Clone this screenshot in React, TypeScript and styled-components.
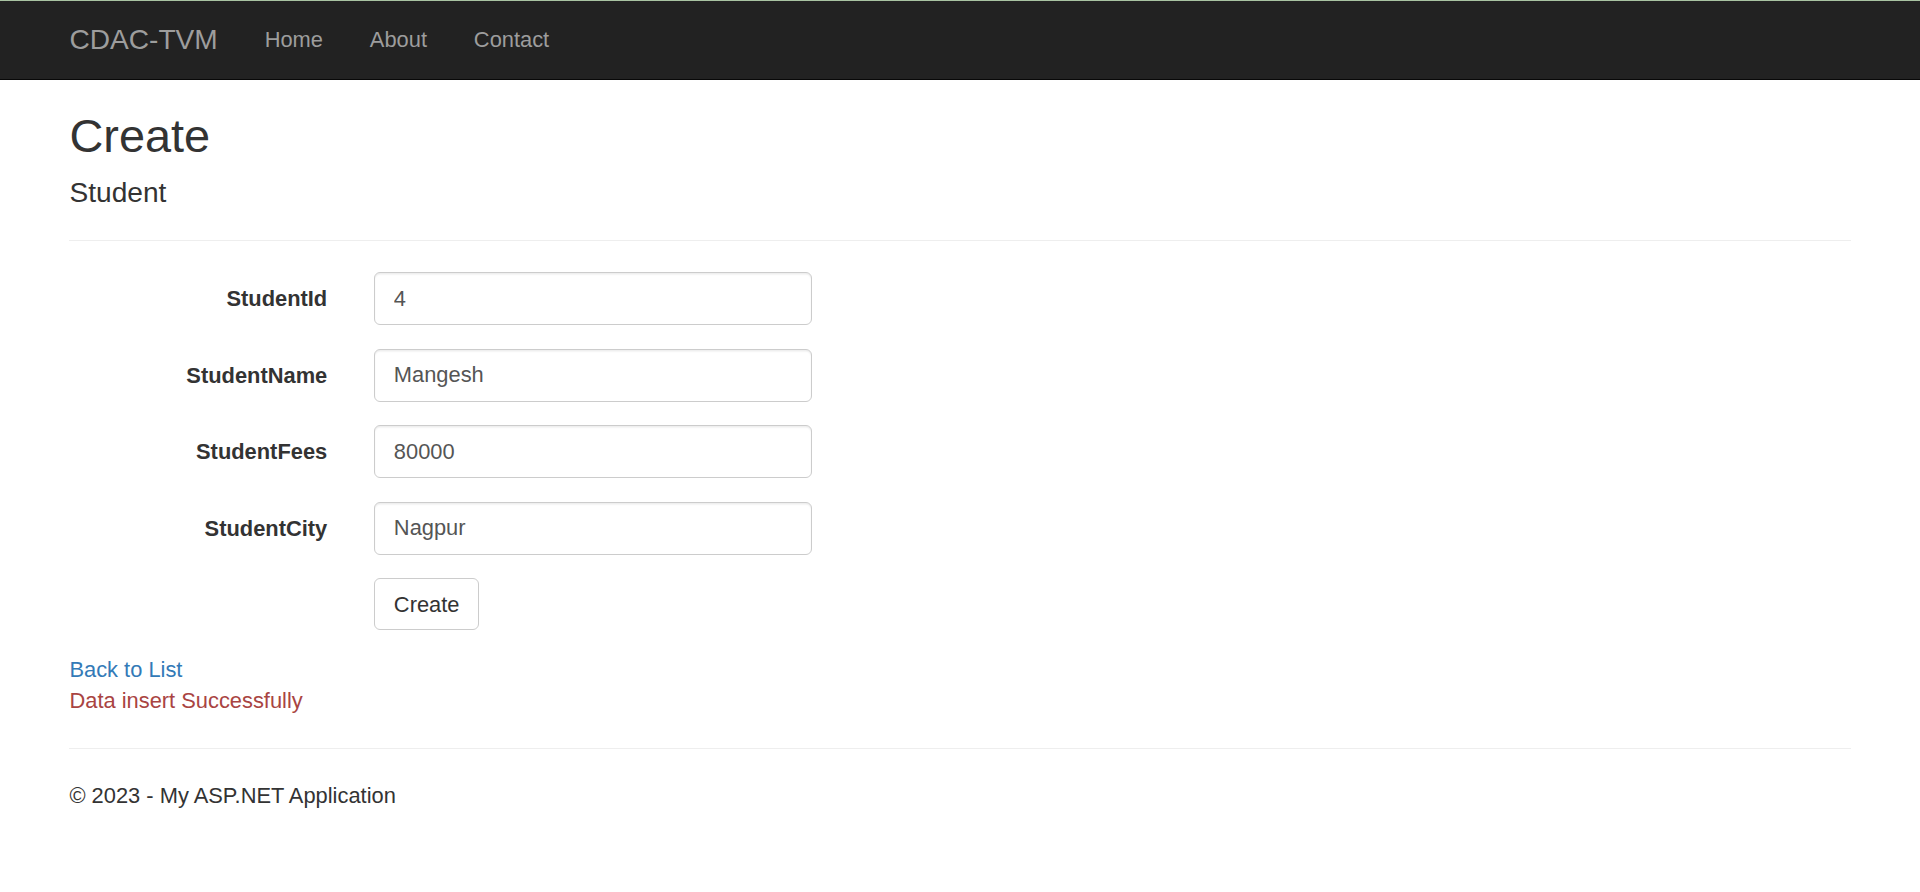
import React from 'react';
import styled, { createGlobalStyle } from 'styled-components';

// Bootstrap 3 / ASP.NET MVC template, shown at 156.25% zoom
const GlobalStyle = createGlobalStyle`
  html, body {
    margin: 0;
    padding: 0;
    background: #fff;
  }
  body {
    font-family: "Liberation Sans", Arial, Helvetica, sans-serif;
    font-size: 21.875px;
    line-height: 31.25px;
    color: #333;
  }
  * {
    box-sizing: border-box;
  }
`;

const Navbar = styled.nav`
  background-color: #222;
  border-top: 1px solid #a9c3a2;
  border-bottom: 1.5px solid #080808;
  height: 80px;
`;

const Container = styled.div`
  max-width: 1828px;
  margin: 0 auto;
  padding: 0 23.4375px;
`;

const NavInner = styled(Container)`
  display: flex;
  align-items: center;
  height: 100%;
`;

const Brand = styled.a`
  display: block;
  margin-left: -23.4375px;
  padding: 22.5px 23.4375px;
  font-size: 28.125px;
  line-height: 31.25px;
  color: #9d9d9d;
  text-decoration: none;
`;

const NavList = styled.ul`
  display: flex;
  list-style: none;
  margin: 0;
  padding: 0;
`;

const NavLink = styled.a`
  display: block;
  padding: 23.4375px;
  font-size: 21.875px;
  line-height: 31.25px;
  color: #9d9d9d;
  text-decoration: none;
`;

const Body = styled(Container)`
  padding-bottom: 31.25px;
`;

const Title = styled.h2`
  margin: 30.5px 0 15.625px;
  font-size: 46.875px;
  font-weight: 500;
  line-height: 1.1;
`;

const SubTitle = styled.h4`
  margin: 15.625px 0;
  font-size: 28.125px;
  font-weight: 500;
  line-height: 1.1;
`;

const Rule = styled.hr`
  margin: 31.25px 0;
  border: 0;
  border-top: 1px solid #eee;
`;

const FormRow = styled.div`
  display: flex;
  margin: 0 -23.4375px 23.4375px;
`;

const Label = styled.label`
  flex: 0 0 16.6667%;
  padding: 10.9px 23.4375px 0;
  text-align: right;
  font-weight: bold;
`;

const Field = styled.div`
  flex: 1;
  padding: 0 23.4375px;
`;

const Input = styled.input`
  display: block;
  width: 438px;
  height: 53.125px;
  padding: 9.375px 18.75px;
  font-family: inherit;
  font-size: 21.875px;
  line-height: 31.25px;
  color: #555;
  background: #fff;
  border: 1px solid #ccc;
  border-radius: 6px;
  box-shadow: inset 0 1.5px 1.5px rgba(0, 0, 0, 0.075);
  outline: none;
`;

const Button = styled.button`
  display: inline-block;
  height: 52px;
  padding: 9.375px 18.75px;
  font-family: inherit;
  font-size: 21.875px;
  line-height: 31.25px;
  color: #333;
  background: #fff;
  border: 1px solid #ccc;
  border-radius: 6px;
  cursor: pointer;
`;

const LinkLine = styled.div`
  a {
    color: #337ab7;
    text-decoration: none;
  }
`;

const Message = styled.div`
  color: #a94442;
`;

const Footer = styled.footer`
  p {
    margin: 0 0 15.625px;
  }
`;

const fields = [
  { name: 'StudentId', value: '4' },
  { name: 'StudentName', value: 'Mangesh' },
  { name: 'StudentFees', value: '80000' },
  { name: 'StudentCity', value: 'Nagpur' },
];

const App: React.FC = () => {
  return (
    <>
      <GlobalStyle />
      <Navbar>
        <NavInner>
          <Brand href="#">CDAC-TVM</Brand>
          <NavList>
            <li><NavLink href="#">Home</NavLink></li>
            <li><NavLink href="#">About</NavLink></li>
            <li><NavLink href="#">Contact</NavLink></li>
          </NavList>
        </NavInner>
      </Navbar>

      <Body>
        <Title>Create</Title>
        <form onSubmit={(e) => e.preventDefault()}>
          <SubTitle>Student</SubTitle>
          <Rule />
          {fields.map((f) => (
            <FormRow key={f.name}>
              <Label htmlFor={f.name}>{f.name}</Label>
              <Field>
                <Input id={f.name} name={f.name} type="text" defaultValue={f.value} />
              </Field>
            </FormRow>
          ))}
          <FormRow>
            <Label />
            <Field>
              <Button type="submit">Create</Button>
            </Field>
          </FormRow>
        </form>

        <LinkLine>
          <a href="#">Back to List</a>
        </LinkLine>
        <Message>Data insert Successfully</Message>

        <Rule />
        <Footer>
          <p>© 2023 - My ASP.NET Application</p>
        </Footer>
      </Body>
    </>
  );
};

export default App;
